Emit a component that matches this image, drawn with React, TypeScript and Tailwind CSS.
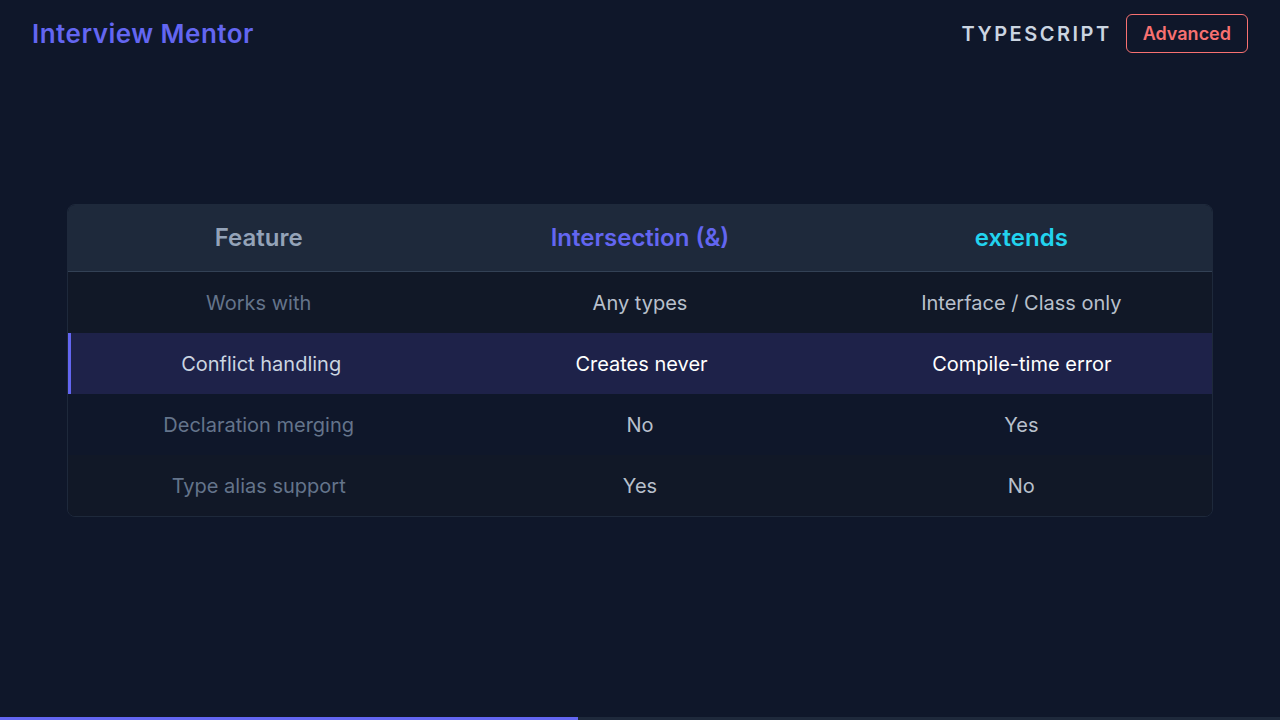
import React from "react";

const rows = [
  { f: "Works with", a: "Any types", b: "Interface / Class only", bg: "bg-[#111827]" },
  { f: "Conflict handling", a: "Creates never", b: "Compile-time error", bg: "bg-[#1e2249]", active: true },
  { f: "Declaration merging", a: "No", b: "Yes", bg: "bg-[#0f172a]" },
  { f: "Type alias support", a: "Yes", b: "No", bg: "bg-[#111827]" },
];

export default function App() {
  return (
    <div className="relative w-[1280px] h-[720px] overflow-hidden bg-[#0f172a] font-[Inter,sans-serif]">
      <div className="flex items-center justify-between px-8 pt-[14px]">
        <div className="text-[26px] font-semibold tracking-[0.5px] text-[#6366f1]">Interview Mentor</div>
        <div className="flex items-center gap-[14px]">
          <span className="text-[20px] font-semibold tracking-[2.5px] text-[#cbd5e1]">TYPESCRIPT</span>
          <span className="rounded-md border border-[#f87171] px-4 py-[5px] text-[18px] font-semibold text-[#f87171]">Advanced</span>
        </div>
      </div>

      <div className="mx-[67px] mt-[151px] overflow-hidden rounded-lg border border-[#1e293b]">
        <div className="grid grid-cols-3 h-[67px] items-center bg-[#1e293b] border-b border-[#334155] text-[24px] font-semibold">
          <div className="text-center text-[#94a3b8]">Feature</div>
          <div className="text-center text-[#6366f1]">Intersection (&amp;)</div>
          <div className="text-center text-[#22d3ee]">extends</div>
        </div>
        {rows.map((r) => (
          <div key={r.f} className={`grid grid-cols-3 h-[61px] items-center text-[20px] ${r.bg} ${r.active ? "border-l-[3px] border-[#6366f1]" : ""}`}>
            <div className={`text-center ${r.active ? "text-[#cbd5e1]" : "text-[#64748b]"}`}>{r.f}</div>
            <div className={`text-center ${r.active ? "text-white" : "text-[#b8c0cc]"}`}>{r.a}</div>
            <div className={`text-center ${r.active ? "text-white" : "text-[#b8c0cc]"}`}>{r.b}</div>
          </div>
        ))}
      </div>

      <div className="absolute bottom-0 left-0 right-0 h-[3px] bg-[#1e293b]">
        <div className="h-full w-[578px] bg-[#6366f1]" />
      </div>
    </div>
  );
}
